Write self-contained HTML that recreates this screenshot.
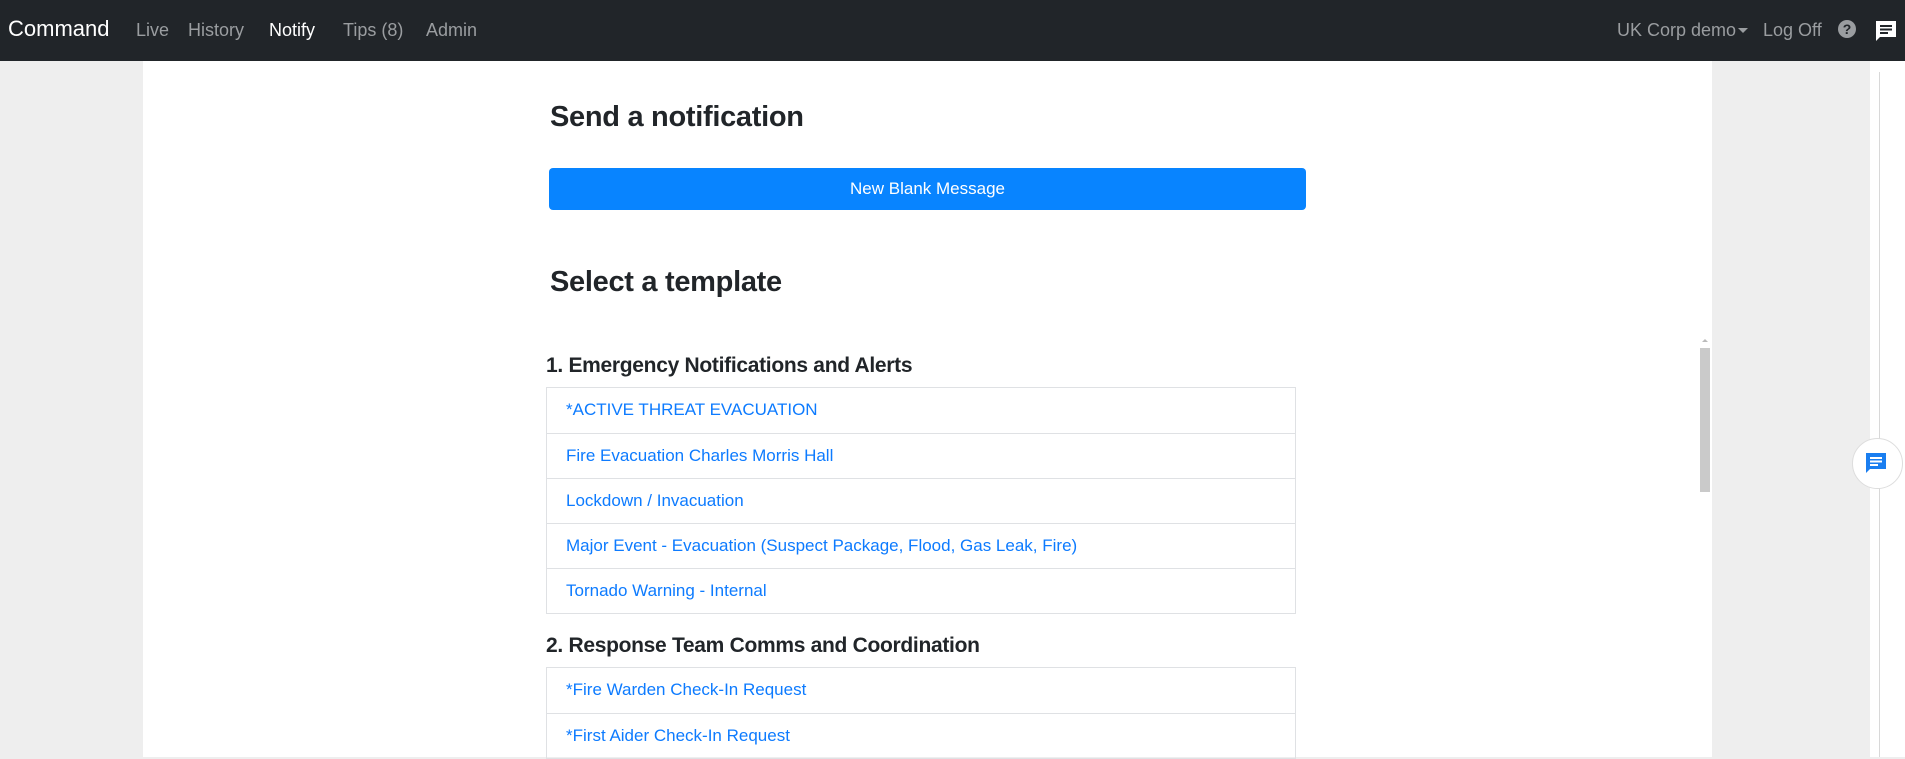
<!DOCTYPE html>
<html><head><meta charset="utf-8"><style>
*{margin:0;padding:0;box-sizing:border-box}
body{width:1905px;height:757px;overflow:hidden;background:#eeeeee;font-family:"Liberation Sans",sans-serif;position:relative}
.nav{position:absolute;left:0;top:0;width:1905px;height:61px;background:#212529}
.nav span{position:absolute;top:20px;font-size:18px;color:#9a9da0;white-space:nowrap}
.main{position:absolute;left:143px;top:61px;width:1569px;height:696px;background:#fff}
.side{position:absolute;left:1870px;top:61px;width:35px;height:696px;background:#fff}
.vline{position:absolute;left:1879px;top:72px;width:1px;height:685px;background:#d8d8d8}
h3{position:absolute;left:550px;font-size:29px;font-weight:bold;color:#212529;letter-spacing:-0.3px}
h5{position:absolute;left:546px;font-size:21px;font-weight:bold;color:#212529;letter-spacing:-0.3px}
.btn{position:absolute;left:549px;top:168px;width:757px;height:42px;background:#0884ff;border-radius:4px;color:#fff;font-size:17px;text-align:center;line-height:42px}
.list{position:absolute;left:546px;width:750px;border:1px solid #dfe1e4}
.list div{height:45px;border-top:1px solid #dfe1e4;color:#0d7bff;font-size:17px;line-height:44px;padding-left:19px}
.list div:first-child{border-top:none}
</style></head><body>
<div class="nav">
<span style="left:8px;top:16px;font-size:22px;color:#fff">Command</span>
<span style="left:136px">Live</span>
<span style="left:188px">History</span>
<span style="left:269px;color:#fff">Notify</span>
<span style="left:343px">Tips (8)</span>
<span style="left:426px">Admin</span>
<span style="left:1617px">UK Corp demo</span>
<div style="position:absolute;left:1738px;top:28px;border-left:5px solid transparent;border-right:5px solid transparent;border-top:5px solid #9a9da0"></div>
<span style="left:1763px">Log Off</span>
<div style="position:absolute;left:1838px;top:20px;width:18px;height:18px;border-radius:50%;background:#9a9da0;color:#212529;font-size:14px;font-weight:bold;text-align:center;line-height:18px">?</div>
<svg style="position:absolute;left:1874px;top:19px" width="24" height="24" viewBox="0 0 24 24"><path d="M2 2h20v16H6l-4 4z" fill="#fff"/><path d="M6 6h12v2H6zM6 9.5h12v2H6zM6 13h8v2H6z" fill="#212529"/></svg>
</div>
<div class="main"></div>
<div class="side"></div>
<div class="vline"></div>
<div style="position:absolute;left:1700px;top:348px;width:10px;height:144px;background:#cacaca"></div>
<div style="position:absolute;left:1702px;top:339px;border-left:3px solid transparent;border-right:3px solid transparent;border-bottom:3px solid #bbb"></div>
<div style="position:absolute;left:1852px;top:438px;width:51px;height:51px;border-radius:50%;background:#fff;border:1px solid #ddd"></div>
<svg style="position:absolute;left:1864px;top:451px" width="24" height="24" viewBox="0 0 24 24"><path d="M2 2h20v16H6l-4 4z" fill="#1a7ef0"/><path d="M6 6h12v2H6zM6 9.5h12v2H6zM6 13h8v2H6z" fill="#fff"/></svg>
<h3 style="top:101px">Send a notification</h3>
<div class="btn">New Blank Message</div>
<h3 style="top:266px">Select a template</h3>
<h5 style="top:354px">1. Emergency Notifications and Alerts</h5>
<div class="list" style="top:387px">
<div>*ACTIVE THREAT EVACUATION</div>
<div>Fire Evacuation Charles Morris Hall</div>
<div>Lockdown / Invacuation</div>
<div>Major Event - Evacuation (Suspect Package, Flood, Gas Leak, Fire)</div>
<div>Tornado Warning - Internal</div>
</div>
<h5 style="top:634px">2. Response Team Comms and Coordination</h5>
<div class="list" style="top:667px">
<div>*Fire Warden Check-In Request</div>
<div>*First Aider Check-In Request</div>
</div>
</body></html>
